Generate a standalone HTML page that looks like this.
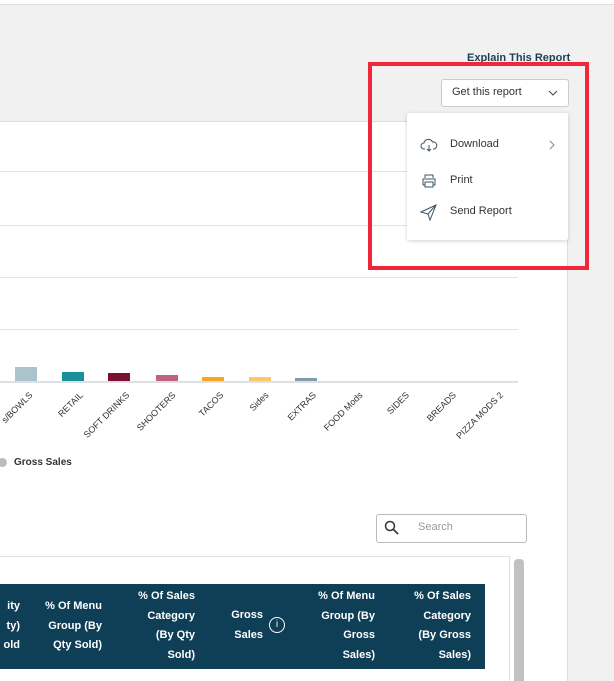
<!DOCTYPE html>
<html><head><style>
*{margin:0;padding:0;box-sizing:border-box}
html,body{width:614px;height:681px;overflow:hidden}
body{background:#f1f1f1;font-family:"Liberation Sans",sans-serif;position:relative}
.abs{position:absolute}
.grid{position:absolute;left:0;width:518px;height:1px;background:#e4e4e4}
.bar{position:absolute;width:22px}
.lbl{position:absolute;font-size:9px;color:#333;transform-origin:right top;transform:rotate(-45deg);white-space:nowrap;text-align:right}
</style></head><body>
<div class="abs" style="left:0;top:0;width:614px;height:5px;background:#fff;border-bottom:1px solid #ddd"></div>
<div class="abs" style="left:467px;top:52px;font-size:11px;font-weight:bold;color:#1d3f55">Explain This Report</div>
<div class="abs" style="left:0;top:121px;width:568px;height:560px;background:#fff;border-top:1px solid #ddd;border-right:1px solid #ddd"></div>
<div class="grid" style="top:171px"></div>
<div class="grid" style="top:225px"></div>
<div class="grid" style="top:277px"></div>
<div class="grid" style="top:329px"></div>
<div class="grid" style="top:381px;height:2px;background:#dde0e6"></div>
<div class="bar" style="left:15px;top:367px;height:14px;background:#abc3cc"></div>
<div class="bar" style="left:62px;top:372px;height:9px;background:#1a9198"></div>
<div class="bar" style="left:108px;top:373px;height:8px;background:#7a1131"></div>
<div class="bar" style="left:156px;top:375px;height:6px;background:#c0637e"></div>
<div class="bar" style="left:202px;top:377px;height:4px;background:#f5a623"></div>
<div class="bar" style="left:249px;top:377px;height:4px;background:#f8c96a"></div>
<div class="bar" style="left:295px;top:378px;height:3px;background:#7f9fa8"></div>
<div class="lbl" style="right:586px;top:390px">s/BOWLS</div>
<div class="lbl" style="right:536px;top:390px">RETAIL</div>
<div class="lbl" style="right:490px;top:390px">SOFT DRINKS</div>
<div class="lbl" style="right:443px;top:390px">SHOOTERS</div>
<div class="lbl" style="right:396px;top:390px">TACOS</div>
<div class="lbl" style="right:350px;top:390px">Sides</div>
<div class="lbl" style="right:303px;top:390px">EXTRAS</div>
<div class="lbl" style="right:256px;top:390px">FOOD Mods</div>
<div class="lbl" style="right:210px;top:390px">SIDES</div>
<div class="lbl" style="right:163px;top:390px">BREADS</div>
<div class="lbl" style="right:116px;top:390px">PIZZA MODS 2</div>
<div class="abs" style="left:-2px;top:458px;width:9px;height:9px;border-radius:50%;background:#bbb"></div>
<div class="abs" style="left:14px;top:457px;font-size:10px;font-weight:bold;color:#333">Gross Sales</div>
<div class="abs" style="left:376px;top:514px;width:151px;height:29px;border:1px solid #bbb;border-radius:3px"></div>
<svg class="abs" style="left:384px;top:520px" width="16" height="16" viewBox="0 0 16 16"><circle cx="6" cy="6" r="4.5" fill="none" stroke="#333" stroke-width="1.5"/><path d="M9.5 9.5L14 14" stroke="#333" stroke-width="1.6"/></svg>
<div class="abs" style="left:418px;top:521px;font-size:11px;color:#999">Search</div>
<div class="abs" style="left:0;top:556px;width:510px;height:140px;border:1px solid #e0e0e0;border-left:none"></div>
<div class="abs" style="left:514px;top:559px;width:10px;height:140px;border-radius:4px;background:#c1c1c1"></div>
<div class="abs" style="left:0;top:584px;width:485px;height:85px;background:#0f3e57;overflow:hidden">
<div class="abs" style="left:-8px;top:13px;width:28px;color:#fff;font-size:11px;font-weight:bold;line-height:19.5px;text-align:right">ity<br>ty)<br>old</div>
<div class="abs" style="left:30px;top:13px;width:72px;color:#fff;font-size:11px;font-weight:bold;line-height:19.5px;text-align:right">% Of Menu<br>Group (By<br>Qty Sold)</div>
<div class="abs" style="left:110px;top:3px;width:85px;color:#fff;font-size:11px;font-weight:bold;line-height:19.5px;text-align:right">% Of Sales<br>Category<br>(By Qty<br>Sold)</div>
<div class="abs" style="left:220px;top:22px;width:43px;color:#fff;font-size:11px;font-weight:bold;line-height:19.5px;text-align:right">Gross<br>Sales</div>
<div class="abs" style="left:269px;top:33px;width:16px;height:16px;border:1px solid #fff;border-radius:50%;color:#fff;font-size:10px;text-align:center;line-height:14px">i</div>
<div class="abs" style="left:290px;top:3px;width:85px;color:#fff;font-size:11px;font-weight:bold;line-height:19.5px;text-align:right">% Of Menu<br>Group (By<br>Gross<br>Sales)</div>
<div class="abs" style="left:380px;top:3px;width:91px;color:#fff;font-size:11px;font-weight:bold;line-height:19.5px;text-align:right">% Of Sales<br>Category<br>(By Gross<br>Sales)</div>
</div>
<div class="abs" style="left:441px;top:79px;width:128px;height:28px;background:#fff;border:1px solid #ccc;border-radius:3px"></div>
<div class="abs" style="left:452px;top:86px;font-size:11px;color:#333">Get this report</div>
<svg class="abs" style="left:548px;top:90px" width="10" height="6"><path d="M1 1L5 5L9 1" fill="none" stroke="#444" stroke-width="1"/></svg>
<div class="abs" style="left:407px;top:113px;width:161px;height:127px;background:#fff;box-shadow:0 1px 4px rgba(0,0,0,.18);border-radius:2px"></div>
<svg class="abs" style="left:420px;top:137px" width="18" height="16" viewBox="0 0 18 16"><path d="M5 12H4a3 3 0 0 1 0-6 4.5 4.5 0 0 1 8.5-1A3 3 0 0 1 14 12h-1M9 8v6M7 12l2 2 2-2" fill="none" stroke="#3a5566" stroke-width="1"/></svg>
<div class="abs" style="left:450px;top:138px;font-size:11px;color:#333">Download</div>
<svg class="abs" style="left:549px;top:140px" width="6" height="10"><path d="M1 1L5 5L1 9" fill="none" stroke="#888" stroke-width="1"/></svg>
<svg class="abs" style="left:421px;top:173px" width="16" height="16" viewBox="0 0 16 16"><path d="M4 5V2h8v3M4 12H2V6h12v6h-2M4 9h8v5H4z" fill="none" stroke="#3a5566" stroke-width="1"/></svg>
<div class="abs" style="left:450px;top:174px;font-size:11px;color:#333">Print</div>
<svg class="abs" style="left:420px;top:204px" width="18" height="17" viewBox="0 0 18 17"><path d="M1 8L16 1L10 16L8 10ZM8 10L16 1" fill="none" stroke="#3a5566" stroke-width="1"/></svg>
<div class="abs" style="left:450px;top:205px;font-size:11px;color:#333">Send Report</div>
<div class="abs" style="left:368px;top:62px;width:221px;height:208px;border:4px solid #f2263a"></div>
</body></html>
